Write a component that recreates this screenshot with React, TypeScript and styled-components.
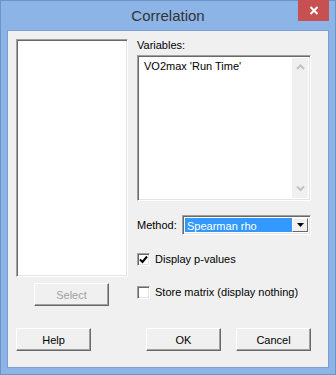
import styled, { createGlobalStyle } from "styled-components";

const GlobalStyle = createGlobalStyle`
  html, body {
    margin: 0;
    padding: 0;
    background: #ffffff;
  }
  body {
    font-family: "Liberation Sans", Arial, sans-serif;
    font-size: 11px;
    color: #000;
  }
`;

function CloseGlyph() {
  return (
    <svg width="10" height="9" viewBox="0 0 10 9">
      <path d="M1.5 1 L8.5 8 M8.5 1 L1.5 8" stroke="#fff" strokeWidth="2" />
    </svg>
  );
}

function Chevron({ dir }: { dir: "up" | "down" }) {
  const d = dir === "up" ? "M1 5 L4.5 1.5 L8 5" : "M1 1.5 L4.5 5 L8 1.5";
  return (
    <svg width="9" height="7" viewBox="0 0 9 7">
      <path d={d} stroke="#c2c2c2" strokeWidth="2" fill="none" />
    </svg>
  );
}

function CheckMark() {
  return (
    <svg width="9" height="9" viewBox="0 0 9 9">
      <path d="M1 4.5 L3.5 7 L8 1.5" stroke="#000" strokeWidth="2" fill="none" />
    </svg>
  );
}

export default function App() {
  return (
    <>
      <GlobalStyle />
      <Window>
        <TitleBar>
          <span />
          <Title>Correlation</Title>
          <CloseButton aria-label="Close">
            <CloseGlyph />
          </CloseButton>
        </TitleBar>
        <Client>
          <Top>
            <LeftCol>
              <SourceList />
              <Button disabled $indent={18}>
                Select
              </Button>
            </LeftCol>
            <RightCol>
              <FieldLabel>Variables:</FieldLabel>
              <VarBox>
                <VarText>VO2max 'Run Time'</VarText>
                <ScrollBar>
                  <Chevron dir="up" />
                  <Chevron dir="down" />
                </ScrollBar>
              </VarBox>
              <MethodRow>
                <span>Method:</span>
                <Combo>
                  <ComboValue>Spearman rho</ComboValue>
                  <ComboButton>
                    <svg width="7" height="4" viewBox="0 0 7 4">
                      <path d="M0 0 H7 L3.5 4 Z" fill="#000" />
                    </svg>
                  </ComboButton>
                </Combo>
              </MethodRow>
              <CheckRow $gap={18}>
                <CheckBox>
                  <CheckMark />
                </CheckBox>
                Display p-values
              </CheckRow>
              <CheckRow $gap={20}>
                <CheckBox />
                Store matrix (display nothing)
              </CheckRow>
            </RightCol>
          </Top>
          <Footer>
            <Button>Help</Button>
            <Spacer />
            <Button>OK</Button>
            <Button>Cancel</Button>
          </Footer>
        </Client>
      </Window>
    </>
  );
}

const Window = styled.div`
  box-sizing: border-box;
  width: 336px;
  height: 375px;
  display: flex;
  flex-direction: column;
  background: #8db4e7;
  border: 1px solid #6f93c6;
`;

const TitleBar = styled.div`
  height: 29px;
  display: grid;
  grid-template-columns: 1fr auto 1fr;
  align-items: start;
`;

const Title = styled.div`
  font-size: 15px;
  color: #333;
  line-height: 15px;
  padding-top: 7px;
`;

const CloseButton = styled.div`
  justify-self: end;
  width: 31px;
  height: 21px;
  margin-top: -1px;
  margin-right: 6px;
  background: #c75050;
  display: flex;
  align-items: center;
  justify-content: center;
`;

const Client = styled.div`
  flex: 1;
  margin: 0 6px 6px;
  border: 1px solid #7b9fd2;
  background: #f0f0f0;
  padding: 8px 8px 0;
  display: flex;
  flex-direction: column;
`;

const Top = styled.div`
  display: grid;
  grid-template-columns: 112px 174px;
  column-gap: 9px;
`;

const LeftCol = styled.div`
  display: flex;
  flex-direction: column;
  gap: 6px;
`;

const sunken = `
  box-sizing: border-box;
  border: 1px solid;
  border-color: #a0a0a0 #ffffff #ffffff #a0a0a0;
  box-shadow: inset 1px 1px 0 #696969, inset -1px -1px 0 #e3e3e3;
  background: #ffffff;
`;

const SourceList = styled.div`
  ${sunken}
  height: 238px;
`;

const Button = styled.button<{ $indent?: number }>`
  box-sizing: border-box;
  width: 75px;
  height: 23px;
  margin-left: ${({ $indent }) => $indent ?? 0}px;
  padding: 0;
  font-family: "Liberation Sans", Arial, sans-serif;
  font-size: 11px;
  color: #000;
  background: #f0f0f0;
  border: 1px solid;
  border-color: #ffffff #696969 #696969 #ffffff;
  box-shadow: inset -1px -1px 0 #a0a0a0, inset 1px 1px 0 #f0f0f0;

  &:disabled {
    color: #a0a0a0;
  }
`;

const RightCol = styled.div`
  display: flex;
  flex-direction: column;
  white-space: nowrap;
`;

const FieldLabel = styled.div`
  line-height: 13px;
`;

const VarBox = styled.div`
  ${sunken}
  margin-top: 3px;
  height: 146px;
  display: flex;
  padding: 2px;
`;

const VarText = styled.div`
  flex: 1;
  padding: 2px 0 0 4px;
  line-height: 13px;
`;

const ScrollBar = styled.div`
  width: 16px;
  background: #f0f0f0;
  display: flex;
  flex-direction: column;
  justify-content: space-between;
  align-items: center;
  padding: 6px 0;
`;

const MethodRow = styled.div`
  margin-top: 14px;
  display: flex;
  align-items: center;
  justify-content: space-between;
`;

const Combo = styled.div`
  ${sunken}
  width: 129px;
  height: 20px;
  display: flex;
  padding: 2px;
`;

const ComboValue = styled.div`
  flex: 1;
  background: #3399ff;
  color: #fff;
  line-height: 16px;
  padding-left: 2px;
`;

const ComboButton = styled.div`
  box-sizing: border-box;
  width: 16px;
  background: #f0f0f0;
  border: 1px solid;
  border-color: #ffffff #696969 #696969 #ffffff;
  display: flex;
  align-items: center;
  justify-content: center;
`;

const CheckRow = styled.div<{ $gap: number }>`
  margin-top: ${({ $gap }) => $gap}px;
  display: flex;
  align-items: center;
  gap: 5px;
  line-height: 13px;
`;

const CheckBox = styled.div`
  ${sunken}
  width: 13px;
  height: 13px;
  display: flex;
  align-items: center;
  justify-content: center;
`;

const Footer = styled.div`
  margin-top: 22px;
  padding-right: 9px;
  display: flex;
  gap: 15px;
`;

const Spacer = styled.div`
  flex: 1;
`;
